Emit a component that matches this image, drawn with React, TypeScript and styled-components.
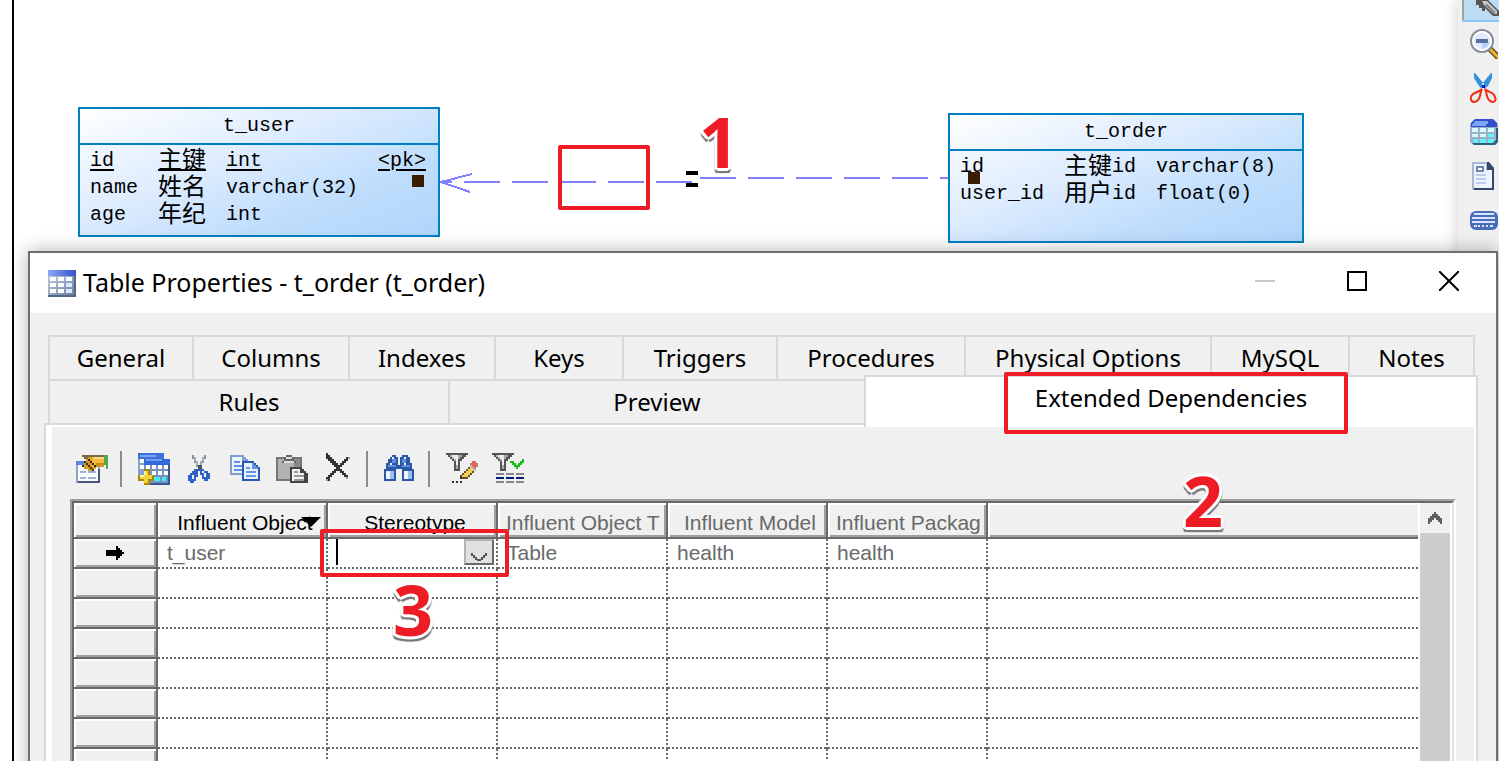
import React from 'react';
import styled, { createGlobalStyle } from 'styled-components';

const GlobalStyle = createGlobalStyle`
  *, *::before, *::after { box-sizing: border-box; }
  body { margin: 0; background: #fff; }
  button, input { font: inherit; color: inherit; }
`;

const ui = `"Noto Sans", "Open Sans", sans-serif`;
const gridFont = `"Liberation Sans", Arial, sans-serif`;
const face = '#f0f0f0';
const dark = '#696969';
const mid = '#a0a0a0';
const tabLine = '#d9d9d9';
const red = '#ee1c25';

const Page = styled.div`
  position: relative;
  display: flex;
  height: 100vh;
  overflow: hidden;
  background: #fff;
`;

const Canvas = styled.main`
  position: relative;
  flex: 1;
  margin-left: 12px;
  border-left: 2px solid #000;
  overflow: hidden;
`;

const Connector = styled.svg`
  position: absolute;
  left: 426px;
  top: 160px;
`;

const Entity = styled.section<{ $x: number; $y: number; $w: number }>`
  position: absolute;
  left: ${p => p.$x}px;
  top: ${p => p.$y}px;
  width: ${p => p.$w}px;
  height: 130px;
  border: 2px solid #0080c0;
  background: linear-gradient(158deg, #fff 0%, #dcebfe 42%, #c0defc 70%, #b0d5fb 100%);
  font-family: "Liberation Mono", "Noto Sans CJK SC", monospace;
  font-size: 20px;
  color: #000;
`;

const EntityTitle = styled.h2`
  margin: 0;
  height: 36px;
  border-bottom: 2px solid #0080c0;
  font-size: 20px;
  font-weight: 400;
  line-height: 34px;
  text-align: center;
`;

const EntityTable = styled.table`
  width: 100%;
  margin-top: 2px;
  table-layout: fixed;
  border-collapse: collapse;
`;

const Field = styled.td<{ $key?: boolean; $end?: boolean }>`
  height: 27px;
  padding: 0 ${p => (p.$end ? 12 : 0)}px 0 0;
  line-height: 27px;
  white-space: nowrap;
  vertical-align: baseline;
  text-align: ${p => (p.$end ? 'right' : 'left')};
  text-decoration: ${p => (p.$key ? 'underline 2px' : 'none')};
  text-underline-offset: 3px;
  &:first-child { padding-left: 10px; }
`;

const Han = styled.span`
  font-family: "Noto Sans CJK SC", sans-serif;
  font-size: 24px;
  line-height: 1px;
  vertical-align: -2px;
`;

const Handle = styled.span<{ $x: number; $y: number }>`
  position: absolute;
  left: ${p => p.$x}px;
  top: ${p => p.$y}px;
  width: 12px;
  height: 12px;
  background: #3a1c00;
`;

const Palette = styled.aside`
  flex: 0 0 41px;
  padding-left: 4px;
  display: flex;
  flex-direction: column;
  background: ${face};
  box-shadow: -2px 0 12px rgba(0, 0, 0, 0.16);
  overflow: hidden;
`;

const PaletteButton = styled.button<{ $active?: boolean }>`
  flex: none;
  width: 44px;
  height: ${p => (p.$active ? 22 : 44)}px;
  padding: 0 0 0 ${p => (p.$active ? 10 : 8)}px;
  display: flex;
  align-items: ${p => (p.$active ? 'flex-end' : 'center')};
  border: 0 solid #90c8f6;
  border-width: ${p => (p.$active ? '0 0 2px 0' : '0')};
  box-shadow: ${p => (p.$active ? `inset 2px 0 ${mid}` : 'none')};
  background: ${p => (p.$active ? '#bcdcf4' : 'transparent')};
`;

const Dialog = styled.section`
  position: absolute;
  left: 28px;
  right: 1px;
  top: 251px;
  border: 2px solid #6e6e6e;
  background: ${face};
  box-shadow: 0 0 18px rgba(0, 0, 0, 0.3);
  font-family: ${ui};
  color: #000;
`;

const TitleBar = styled.header`
  display: flex;
  align-items: center;
  height: 60px;
  padding: 0 1px 0 18px;
  background: #fff;
`;

const Title = styled.h1`
  flex: 1;
  margin: 0 0 2px 7px;
  font-size: 25px;
  line-height: 32px;
  font-weight: 400;
`;

const WindowButton = styled.button`
  display: flex;
  align-items: center;
  justify-content: center;
  width: 92px;
  height: 56px;
  margin-bottom: 4px;
  padding: 0;
  border: 0;
  background: transparent;
`;

const Tabs = styled.div`
  padding: 22px 18px 0;
`;

const TabRow = styled.div`
  display: flex;
  height: 44px;
  margin-right: 3px;
`;

const Tab = styled.button<{ $grow: number }>`
  flex: ${p => p.$grow} 0 0;
  min-width: 0;
  height: 44px;
  padding: 0;
  border: 2px solid ${tabLine};
  border-right-width: 0;
  border-bottom-width: 0;
  background: ${face};
  font-size: 24px;
  line-height: 40px;
  white-space: nowrap;
  &:last-child { border-right-width: 2px; }
`;

const ActiveTab = styled(Tab)`
  position: relative;
  height: 52px;
  margin: -4px -3px 0 0;
  padding-bottom: 8px;
  background: #fff;
`;

const Panel = styled.div`
  margin: 0 18px 0 14px;
  border: 2px solid ${tabLine};
  background: ${face};
  box-shadow: inset 6px 0 #fff, inset -2px 2px #fff;
  padding: 2px 20px 0 24px;
`;

const Toolbar = styled.div`
  display: flex;
  align-items: center;
  height: 72px;
  padding: 24px 0 12px;
  margin-left: -1px;
`;

const ToolButton = styled.button`
  width: 46px;
  height: 32px;
  padding: 0 7px;
  border: 0;
  background: transparent;
`;

const Divider = styled.span`
  width: 2px;
  height: 36px;
  margin: 0 9px 0 5px;
  background: #8c8c8c;
`;

const GridFrame = styled.div`
  display: flex;
  border: 2px solid ${mid};
  border-right-color: #fff;
  border-bottom: 0;
  background: #fff;
  font-family: ${gridFont};
  font-size: 21px;
`;

const GridTable = styled.table`
  flex: 1;
  width: 0;
  min-width: 0;
  table-layout: fixed;
  border-spacing: 0;
  border: 2px solid ${dark};
  border-width: 2px 0 0 2px;
`;

const raised = `
  background: ${face};
  border-style: solid;
  border-color: transparent ${dark} ${dark} transparent;
  border-width: 0 2px 2px 0;
  box-shadow: inset 2px 2px #fff, inset -2px -2px ${mid};
`;

const HeadCell = styled.th<{ $muted?: boolean; $start?: boolean }>`
  position: relative;
  height: 36px;
  padding: 6px 2px 0 8px;
  ${raised}
  overflow: hidden;
  white-space: nowrap;
  font-weight: 400;
  line-height: 28px;
  text-align: ${p => (p.$start ? 'left' : 'center')};
  color: ${p => (p.$muted ? dark : '#000')};
  &:last-child { border-right-width: 0; box-shadow: inset 2px 2px #fff, inset 0 -2px ${mid}; }
`;

const SortArrow = styled.svg`
  position: absolute;
  right: 5px;
  top: 14px;
`;

const RowHead = styled.th`
  height: 30px;
  padding: 0;
  ${raised}
  svg { display: block; margin: 0 auto; }
`;

const Cell = styled.td`
  height: 30px;
  padding: 0 0 2px 9px;
  line-height: 28px;
  color: ${dark};
  white-space: nowrap;
  background:
    repeating-linear-gradient(90deg, ${dark} 0 2px, transparent 2px 4px) left bottom / 100% 2px no-repeat,
    repeating-linear-gradient(180deg, ${dark} 0 2px, transparent 2px 4px) right top / 2px 100% no-repeat;
  &:last-child {
    background: repeating-linear-gradient(90deg, ${dark} 0 2px, transparent 2px 4px) left bottom / 100% 2px no-repeat;
  }
`;

const Combo = styled.div`
  display: flex;
  height: 26px;
  margin: 0 4px 2px -1px;
`;

const ComboInput = styled.input`
  flex: 1;
  min-width: 0;
  padding: 0;
  border: 0;
  border-left: 2px solid #000;
  background: #fff;
  outline: 0;
`;

const ComboButton = styled.button`
  width: 30px;
  padding: 0;
  border: 2px solid;
  border-color: #b4b4b4 ${dark} ${dark} #b4b4b4;
  background: #e1e1e1;
  svg { display: block; margin: 10px auto 0; }
`;

const ScrollTrack = styled.div`
  width: 36px;
  border: solid #e3e3e3;
  border-width: 2px 2px 0 0;
  border-top-color: ${dark};
  padding: 0 2px;
  display: flex;
  flex-direction: column;
  background: #fff;
`;

const ScrollUp = styled.button`
  height: 30px;
  padding: 0;
  border: 0;
  background: ${face};
  svg { display: block; margin: 0 auto; }
`;

const ScrollThumb = styled.div`
  flex: 1;
  background: #cdcdcd;
`;

const Marker = styled.div<{ $x: number; $y: number; $w: number; $h: number }>`
  position: absolute;
  left: ${p => p.$x}px;
  top: ${p => p.$y}px;
  width: ${p => p.$w}px;
  height: ${p => p.$h}px;
  border: 4px solid ${red};
  border-radius: 2px;
  pointer-events: none;
`;

const Step = styled.strong<{ $x: number; $y: number }>`
  position: absolute;
  left: ${p => p.$x}px;
  top: ${p => p.$y}px;
  font: 700 70px/70px ${ui};
  color: ${red};
  text-shadow:
    2px 0 #fff, -2px 0 #fff, 0 2px #fff, 0 -2px #fff,
    2px 2px #fff, -2px 2px #fff, 2px -2px #fff, -2px -2px #fff,
    3px 1px #fff, -3px 1px #fff, 0 3px #fff, 0 -3px #fff,
    2px 5px 1px #777, -2px 5px 1px #777, 3px 3px 1px #999, -3px 3px 1px #aaa;
`;

const Pix = ({ children, size = 32 }: { children: React.ReactNode; size?: number }) => (
  <svg width={size} height={size} viewBox="0 0 16 16" shapeRendering="crispEdges" display="block" aria-hidden="true">
    {children}
  </svg>
);

const PropertiesIcon = () => (
  <Pix>
    <path fill="#8fa3c4" d="M0 4h12v11H0z" />
    <path fill="#f8faff" d="M1 6h10v8H1z" />
    <path fill="#5b86e0" d="M0 4h4v2H0z" />
    <path fill="#9fb2d2" d="M2 9h3v1H2zM6 9h4v1H6zM2 12h3v1H2zM6 12h4v1H6z" />
    <path fill="#44577d" d="M11 8h1v7H1v-1h10z" />
    <path fill="#7b6a45" d="M3 1h11v1H3zM4 2h4v1H4z" />
    <path fill="#d99a20" d="M4 4h1V3h1V2h8v5h-4v1H8v1H6V8H4V7H3V6h1z" />
    <path fill="#f5b93c" d="M8 2h6v4h-4v1H8z" />
    <path fill="#fbd77c" d="M9 2h5v1H9z" />
    <path fill="#c78a18" d="M10 5h4v1h-3v1h-1z" />
    <path fill="#3a2c10" d="M4 4h1v1H4zM3 6h1v1H3zM6 3h1v1H6zM5 5h1v1H5zM7 4h1v1H7zM6 6h1v1H6zM8 5h1v1H8zM7 7h1v1H7zM9 6h1v1H9zM8 8h1v1H8z" />
    <path fill="#4fa653" d="M14 1h2v7h-1V6h-1z" />
  </Pix>
);

const AddRowIcon = () => (
  <Pix>
    <path fill="#88a0ca" d="M0 0h13v14H0z" />
    <path fill="#3b70dc" d="M0 0h13v3H0z" />
    <path fill="#7aa3f2" d="M1 1h8v1H1z" />
    <path fill="#fff" d="M1 3h2v2H1zM1 6h2v2H1z" />
    <path fill="#7892c2" d="M3 3h13v13H3z" />
    <path fill="#3469dc" d="M3 3h13v3H3z" />
    <path fill="#6f9bf0" d="M4 3h8v1H4z" />
    <path fill="#fff" d="M4 6h2v2H4zM7 6h2v2H7zM10 6h2v2h-2zM13 6h2v2h-2zM7 9h2v2H7zM10 9h2v2h-2zM13 9h2v2h-2z" />
    <path fill="#3cf3f5" d="M8 12h3v2H8zM12 12h2v2h-2z" />
    <path fill="#38588f" d="M15 6h1v10H5v-1h10z" />
    <path fill="#a98908" d="M3 8h3v3h2v3H6v2H3v-2H0v-3h3z" />
    <path fill="#f3d43c" d="M3 9h2v2h2v2H5v2H3v-2H1v-2h2z" />
    <path fill="#fff6a2" d="M3 9h1v2H3zM1 11h2v1H1z" />
  </Pix>
);

const CutIcon = () => (
  <Pix>
    <path fill="#8c939b" d="M4 1h1v2h1v2h1v2H6V5H5V3H4zM10 1h1v2h-1v2H9v2H8V5h1V3h1z" />
    <path fill="#a9aeb5" d="M5 2h1v2h1v2h1v1H7V6H6V4H5zM9 2h1v2H9v2H8V4h1z" />
    <path fill="#4c545f" d="M7 6h2v2H7z" />
    <path fill="#2f62c8" d="M5 8h5v1H9v1h1V9h2v1h1v3h-1v1H10v-1H9v-2H8V9H7v3H6v2H5v1H3v-1H2v-3h1v-1h1V9h1z" />
    <path fill="#f0f0f0" d="M4 11h1v2H4zM10 10h1v2h-1z" />
  </Pix>
);

const CopyIcon = () => (
  <Pix>
    <path fill="#7f9fcf" d="M0 1h7v1h1v1h1v8H0z" />
    <path fill="#eef5ff" d="M1 2h5v2h2v6H1z" />
    <path fill="#5f90da" d="M2 4h3v1H2zM2 6h4v1H2zM2 8h4v1H2z" />
    <path fill="#2858b6" d="M6 4h6v1h1v1h1v1h1v7H6z" />
    <path fill="#eaf2ff" d="M7 5h4v3h3v5H7z" />
    <path fill="#6795e2" d="M11 5h1v1h1v1h1v1h-3zM8 7h2v1H8zM8 9h5v1H8zM8 11h5v1H8z" />
  </Pix>
);

const PasteIcon = () => (
  <Pix>
    <path fill="#777" d="M0 2h13v12H0z" />
    <path fill="#b2b2b2" d="M1 3h11v10H1z" />
    <path fill="#8b8b8b" d="M9 3h3v10H9z" />
    <path fill="#666" d="M5 1h3v1h1v2h1v1H3V4h1V2h1z" />
    <path fill="#ddd" d="M5 2h3v1H5zM4 4h5v1H4z" />
    <path fill="#444" d="M7 7h6v1h1v1h1v1h1v5H7z" />
    <path fill="#f3f3f3" d="M8 8h4v2h2v4H8z" />
    <path fill="#999" d="M9 9h2v1H9zM9 11h5v1H9zM9 13h5v1H9z" />
  </Pix>
);

const DeleteIcon = () => (
  <Pix>
    <path fill="#333" d="M2 0h1v1h1v1h1v1h1v1h1v1h1v1h1V5h1V4h1V3h1V2h2v1h-1v1h-1v1h-1v1h-1v1H9v1h1v1h1v1h1v1h1v2h-1v-1h-1v-1h-1v-1H9V9H7v1H6v1H5v1H4v2H2v-2h1v-1h1v-1h1V9h1V8h1V7H6V6H5V5H4V4H3V3H2z" />
    <path fill="#999" d="M13 2h1v1h-1zM2 13h1v1H2zM12 12h1v1h-1z" />
  </Pix>
);

const FindIcon = () => (
  <Pix>
    <path fill="#2a57a8" d="M4 1h2v1h1v4h1V2h1V1h3v1h1v3h1v3h1v6H9V8H6v6H0V8h1V5h1V3h1V2h1z" />
    <path fill="#5f8fdc" d="M4 3h2v2H4zM2 6h4v1H2zM9 3h2v2H9zM9 6h4v1H9z" />
    <path fill="#9dbcf0" d="M1 9h4v4H1zM10 9h4v4h-4z" />
    <path fill="#f2f7ff" d="M4 2h1v1H4zM3 5h1v1H3zM1 9h2v4H1zM10 2h1v1h-1zM10 5h1v1h-1zM10 9h2v4h-2z" />
  </Pix>
);

const Funnel = () => (
  <>
    <path fill="#555" d="M0 0h11v1h-1v1H9v1H8v1H7v5H4V4H3V3H2V2H1V1H0z" />
    <path fill="#aaa" d="M2 1h6v1H2zM3 2h4v1H3zM4 3h2v1H4zM5 4h1v4H5z" />
    <path fill="#eee" d="M3 1h3v1H3zM4 2h2v1H4zM5 3h1v3H5z" />
  </>
);

const EditFilterIcon = () => (
  <Pix>
    <Funnel />
    <path fill="#665022" d="M7 13v-2h1v-1h1V9h1V8h1V7h1V6h1v1h1v1h1v1h-1v1h-1v1h-1v1h-1v1z" />
    <path fill="#efcf57" d="M8 12v-1h1v-1h1V9h1V8h1V7h1v1h1v1h-1v1h-1v1h-1v1z" />
    <path fill="#b8babd" d="M12 6h1v1h1v1h1v1h-1V8h-1V7h-1z" />
    <path fill="#d96c60" d="M13 4h2v1h1v2h-1v1h-1V7h-1V6h-1V5h1z" />
    <path fill="#333" d="M3 14h1v1H3zM5 14h1v1H5zM7 14h1v1H7zM7 12h1v1H7z" />
  </Pix>
);

const ApplyFilterIcon = () => (
  <Pix>
    <Funnel />
    <path fill="#14bd1b" d="M9 4h1v1h1v1h1v1h1V6h1V5h1V4h1V2h-1v1h-1v1h-1v1h-1V4h-1V3H9z" transform="translate(0 1)" />
    <path fill="#888" d="M2 10h4v1H2zM7 10h4v1H7zM12 10h4v1h-4zM2 14h4v1H2zM7 14h4v1H7zM12 14h4v1h-4z" />
    <path fill="#001a80" d="M2 12h4v1H2zM7 12h4v1H7zM12 12h4v1h-4z" />
  </Pix>
);

const WindowIcon = () => (
  <svg width="28" height="27" viewBox="0 0 28 27" aria-hidden="true">
    <defs>
      <linearGradient id="bar"><stop stopColor="#8daaf6" /><stop offset="1" stopColor="#3450c8" /></linearGradient>
      <linearGradient id="body" x2="1" y2="1"><stop stopColor="#c8d3e8" /><stop offset="1" stopColor="#667b9c" /></linearGradient>
    </defs>
    <path fill="url(#body)" d="M0 0h28v27H0z" />
    <path fill="url(#bar)" d="M0 0h28v6H0z" />
    <path fill="#fff" d="M2 7h6v4H2zM10 7h6v4h-6zM18 7h6v4h-6zM2 13h6v4H2zM10 13h6v4h-6zM2 19h6v4H2zM10 19h6v4h-6z" />
    <path fill="#dce8ff" d="M18 13h6v4h-6zM18 19h6v4h-6z" />
    <path fill="#52668a" d="M26 6h2v21H0v-2h26z" />
  </svg>
);

const HandIcon = () => (
  <svg width="28" height="20" viewBox="0 0 28 20" aria-hidden="true">
    <path fill="#555" d="M4 0h12l12 12v4h-7L13 8v3h-3V8H7V5H4z" />
    <path fill="#c5c7c9" d="M10 1h5l10 10v3h-3L12 5z" />
    <path fill="#777" d="M15 4l8 8v2L13 5z" />
  </svg>
);

const ZoomOutIcon = () => (
  <svg width="28" height="30" viewBox="0 0 28 30" aria-hidden="true">
    <path stroke="#6b5213" strokeWidth="6" d="M20 20l9 9" />
    <path stroke="#e7b943" strokeWidth="3" d="M20 20l9 9" />
    <circle cx="12" cy="12" r="11" fill="#dfeafd" stroke="#858b94" strokeWidth="2" />
    <circle cx="12" cy="12" r="9" fill="none" stroke="#fff" strokeWidth="2" />
    <path fill="#b8d0fa" d="M12 13h8q-2 7-8 7z" />
    <path fill="#56719c" d="M6 10h12v4H6z" />
  </svg>
);

const ScissorsIcon = () => (
  <svg width="28" height="30" viewBox="0 0 28 30" aria-hidden="true">
    <path fill="#3292dc" d="M4 0h1l9 11v5h-2l-3-3-5-8zM22 0h-1l-9 11v5h2l4-3 4-8z" />
    <path fill="#1010e0" d="M12 12h3v3h-3z" />
    <path fill="none" stroke="#f52b12" strokeWidth="2" d="M12 16c-2 3-1 8-4 11-4 4-8 1-7-3 1-5 7-4 11-8zM15 16c2 3 1 8 4 11 4 4 8 1 6-3-1-5-6-4-10-8z" />
  </svg>
);

const TableIcon = () => (
  <svg width="28" height="27" viewBox="0 0 28 27" aria-hidden="true">
    <path fill="#9db0c4" d="M4 1h20l4 4v18l-3 3H4l-4-3V5z" />
    <path fill="#2f4fce" d="M5 0h18l4 4v4H1V4z" />
    <path fill="#7aa5fa" d="M5 2h13v3H3zM2 5h14v2H2z" />
    <path fill="#d4fbff" d="M2 9h6v4H2zM10 9h6v4h-6zM18 9h6v4h-6zM2 15h6v3H2zM10 15h6v3h-6z" />
    <path fill="#61f3fb" d="M18 15h6v3h-6zM3 20h5v4H4zM10 20h6v4h-6zM18 20h6v2l-2 2h-4z" />
    <path fill="#2d607d" d="M26 9h2v14l-3 3H4l-2-2h21l3-3z" />
  </svg>
);

const DocumentIcon = () => (
  <svg width="28" height="28" viewBox="0 0 28 28" aria-hidden="true">
    <path fill="#a9b8d0" d="M2 0h15l7 6v22H2z" />
    <path fill="#edf3fd" d="M4 2h12v6h6v18H4z" />
    <path fill="#334869" d="M17 0h2l5 6v22H4v-2h18V8h-5z" />
    <path fill="#7086a8" d="M6 4h8v6H6z" />
    <path fill="#b9cbee" d="M6 12h10v2H6zM6 16h10v2H6zM6 20h10v2H6z" />
    <path fill="#fff" d="M8 6h4v2H8z" />
  </svg>
);

const DatabaseIcon = () => (
  <svg width="28" height="19" viewBox="0 0 28 19" aria-hidden="true">
    <rect width="28" height="19" rx="6" fill="#496dbb" />
    <path fill="#d8e5fd" d="M4 2h20v2H4zM2 6h23v2H2zM2 10h23v2H2z" />
    <path fill="#d8e5fd" d="M4 14h3v2H4zM8 14h2v2H8zM12 14h2v2h-2zM16 14h2v2h-2zM20 14h3v2h-3z" />
  </svg>
);

const topTabs: [string, number][] = [
  ['General', 142], ['Columns', 154], ['Indexes', 144], ['Keys', 126], ['Triggers', 152],
  ['Procedures', 186], ['Physical Options', 244], ['MySQL', 136], ['Notes', 123],
];

const tools: [string, React.ReactNode][][] = [
  [['Properties', <PropertiesIcon />]],
  [['Add a row', <AddRowIcon />], ['Cut', <CutIcon />], ['Copy', <CopyIcon />], ['Paste', <PasteIcon />], ['Delete', <DeleteIcon />]],
  [['Find', <FindIcon />]],
  [['Customize filter', <EditFilterIcon />], ['Enable filter', <ApplyFilterIcon />]],
];

const palette: [string, React.ReactNode][] = [
  ['Zoom out', <ZoomOutIcon />], ['Cut', <ScissorsIcon />], ['Table', <TableIcon />],
  ['View', <DocumentIcon />], ['Procedure', <DatabaseIcon />],
];

const blankRows = [1, 2, 3, 4, 5, 6, 7];

export default function App() {
  return (
    <Page>
      <GlobalStyle />
      <Canvas>
        <Entity $x={64} $y={107} $w={362}>
          <EntityTitle>t_user</EntityTitle>
          <EntityTable>
            <colgroup><col style={{ width: 78 }} /><col style={{ width: 68 }} /><col style={{ width: 136 }} /><col /></colgroup>
            <tbody>
              <tr><Field $key>id</Field><Field $key><Han>主键</Han></Field><Field $key>int</Field><Field $key $end>&lt;pk&gt;</Field></tr>
              <tr><Field>name</Field><Field><Han>姓名</Han></Field><Field>varchar(32)</Field><Field /></tr>
              <tr><Field>age</Field><Field><Han>年纪</Han></Field><Field>int</Field><Field /></tr>
            </tbody>
          </EntityTable>
          <Handle $x={332} $y={66} />
        </Entity>
        <Entity $x={934} $y={113} $w={356}>
          <EntityTitle>t_order</EntityTitle>
          <EntityTable>
            <colgroup><col style={{ width: 114 }} /><col style={{ width: 92 }} /><col /></colgroup>
            <tbody>
              <tr><Field>id</Field><Field><Han>主键</Han>id</Field><Field>varchar(8)</Field></tr>
              <tr><Field>user_id</Field><Field><Han>用户</Han>id</Field><Field>float(0)</Field></tr>
            </tbody>
          </EntityTable>
          <Handle $x={18} $y={57} />
        </Entity>
        <Connector width="508" height="40" viewBox="440 160 508 40" aria-hidden="true">
          <g stroke="#8080ff" strokeWidth="2" fill="none" shapeRendering="crispEdges">
            <path d="M440 182H692" strokeDasharray="36 12" strokeDashoffset="24" />
            <path d="M700 178H948" strokeDasharray="36 12" />
            <path d="M472 174L441 182L470 192" />
          </g>
          <path fill="#8080ff" d="M442 180h6v4h-6z" />
          <path d="M686 171h12v4h-12zM686 183h12v4h-12z" />
        </Connector>
      </Canvas>

      <Palette aria-label="Palette">
        <PaletteButton $active aria-label="Grabber"><HandIcon /></PaletteButton>
        {palette.map(([name, icon]) => <PaletteButton key={name} aria-label={name}>{icon}</PaletteButton>)}
      </Palette>

      <Dialog role="dialog" aria-labelledby="dialog-title">
        <TitleBar>
          <WindowIcon />
          <Title id="dialog-title">Table Properties - t_order (t_order)</Title>
          <WindowButton aria-label="Minimize"><svg width="20" height="20"><path stroke="#c8c8c8" strokeWidth="2" d="M0 10h20" /></svg></WindowButton>
          <WindowButton aria-label="Maximize"><svg width="20" height="20"><path fill="none" stroke="#000" strokeWidth="2" d="M1 1h18v18H1z" /></svg></WindowButton>
          <WindowButton aria-label="Close"><svg width="20" height="20"><path stroke="#000" strokeWidth="2" d="M0 0l20 20M20 0L0 20" /></svg></WindowButton>
        </TitleBar>

        <Tabs role="tablist">
          <TabRow>
            {topTabs.map(([name, grow]) => <Tab key={name} role="tab" $grow={grow}>{name}</Tab>)}
          </TabRow>
          <TabRow>
            <Tab role="tab" $grow={398}>Rules</Tab>
            <Tab role="tab" $grow={414}>Preview</Tab>
            <ActiveTab role="tab" aria-selected="true" $grow={610}>Extended Dependencies</ActiveTab>
          </TabRow>
        </Tabs>

        <Panel role="tabpanel">
          <Toolbar role="toolbar">
            <ToolGroups />
          </Toolbar>
          <GridFrame>
            <GridTable>
              <colgroup>
                <col style={{ width: 84 }} /><col style={{ width: 170 }} /><col style={{ width: 170 }} />
                <col style={{ width: 170 }} /><col style={{ width: 160 }} /><col style={{ width: 160 }} /><col />
              </colgroup>
              <thead>
                <tr>
                  <HeadCell />
                  <HeadCell>Influent Object<SortArrow width="20" height="10" viewBox="0 0 20 10"><path d="M0 0h20L10 10z" /></SortArrow></HeadCell>
                  <HeadCell>Stereotype</HeadCell>
                  <HeadCell $muted $start>Influent Object T</HeadCell>
                  <HeadCell $muted>Influent Model</HeadCell>
                  <HeadCell $muted $start>Influent Packag</HeadCell>
                  <HeadCell />
                </tr>
              </thead>
              <tbody>
                <tr>
                  <RowHead scope="row">
                    <svg width="18" height="14" viewBox="0 0 18 14" shapeRendering="crispEdges"><path d="M0 4h10V0h2v2h2v2h2v2h2v2h-2v2h-2v2h-2v2h-2v-4H0z" /></svg>
                  </RowHead>
                  <Cell>t_user</Cell>
                  <Cell>
                    <Combo>
                      <ComboInput aria-label="Stereotype" />
                      <ComboButton aria-label="Show stereotypes">
                        <svg width="16" height="8" viewBox="0 0 16 8" shapeRendering="crispEdges"><path fill="#555" d="M0 0h2v2h2v2h2v2h4V4h2V2h2V0h2v3h-2v2h-2v2h-2v1H6V7H4V5H2V3H0z" /></svg>
                      </ComboButton>
                    </Combo>
                  </Cell>
                  <Cell>Table</Cell><Cell>health</Cell><Cell>health</Cell><Cell />
                </tr>
                {blankRows.map(n => (
                  <tr key={n}><RowHead scope="row" /><Cell /><Cell /><Cell /><Cell /><Cell /><Cell /></tr>
                ))}
              </tbody>
            </GridTable>
            <ScrollTrack>
              <ScrollUp aria-label="Scroll up">
                <svg width="14" height="12" viewBox="0 0 14 12" shapeRendering="crispEdges"><path fill="#606060" d="M6 0h2v2h2v2h2v2h2v6h-2v-2h-2V8H8V6H6v2H4v2H2v2H0V6h2V4h2V2h2z" /></svg>
              </ScrollUp>
              <ScrollThumb />
            </ScrollTrack>
          </GridFrame>
        </Panel>
      </Dialog>

      <Marker $x={558} $y={145} $w={92} $h={65} />
      <Marker $x={1004} $y={372} $w={344} $h={62} />
      <Marker $x={320} $y={529} $w={189} $h={48} />
      <Step $x={699} $y={106}>1</Step>
      <Step $x={1183} $y={465}>2</Step>
      <Step $x={393} $y={574}>3</Step>
    </Page>
  );
}

function ToolGroups() {
  return (
    <>
      {tools.map((group, i) => (
        <React.Fragment key={i}>
          {i > 0 && <Divider />}
          {group.map(([name, icon]) => <ToolButton key={name} aria-label={name}>{icon}</ToolButton>)}
        </React.Fragment>
      ))}
    </>
  );
}
